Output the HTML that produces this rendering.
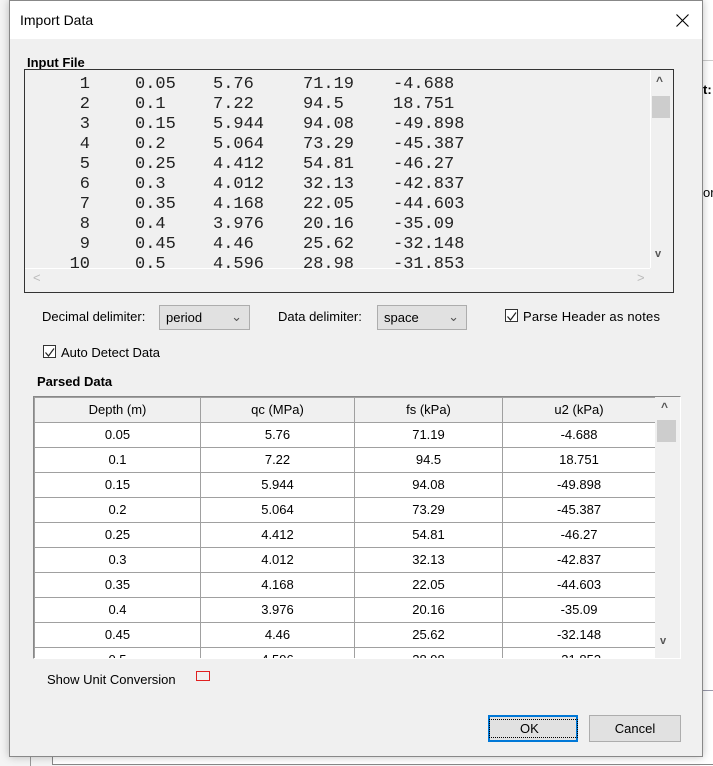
<!DOCTYPE html>
<html><head><style>
body{margin:0;width:713px;height:766px;background:#f4f4f4;position:relative;overflow:hidden;font-family:"Liberation Sans",sans-serif;font-size:13px;color:#000}
.a{position:absolute}
#dlg{left:9px;top:0;width:694px;height:757px;background:#f0f0f0;border:1px solid #888;box-sizing:border-box;box-shadow:0 0 8px rgba(0,0,0,.25)}
#title{left:0;top:0;width:692px;height:38px;background:#fff}
.mono{font-family:"Liberation Mono",monospace;font-size:17px;color:#222;line-height:20px}
table{border-collapse:collapse;font-size:13px;table-layout:fixed}
td,th{border:1px solid #a0a0a0;height:24px;line-height:22px;padding:0;text-align:center}
td{background:#fff}
th{font-weight:normal;background:#f0f0f0}
.cb{width:13px;height:13px;border:1px solid #333;background:#fff;box-sizing:border-box}
.sel{background:#e1e1e1;border:1px solid #adadad;box-sizing:border-box;height:25px;font-size:13px;padding:4px 6px}
</style></head><body>
<div class="a" style="left:700px;top:0;width:13px;height:766px;background:#fff"></div>
<div class="a" style="left:703px;top:60px;width:10px;height:1px;background:#ccc"></div>
<div class="a" style="left:703px;top:82px;font-size:13px;font-weight:bold">t:</div>
<div class="a" style="left:703px;top:185px;font-size:13px">or</div>
<div class="a" style="left:703px;top:690px;width:10px;height:1px;background:#99a"></div>
<div class="a" style="left:30px;top:757px;width:1px;height:9px;background:#999"></div>
<div class="a" style="left:52px;top:757px;width:661px;height:7px;border:1px solid #888;border-top:none;background:#fff"></div>
<div id="dlg" class="a">
<div id="title" class="a"><div class="a" style="left:10px;top:11px;font-size:14px">Import Data</div>
<svg class="a" style="left:666px;top:13px" width="13" height="13"><path d="M0.5 0.5L12.5 12.5M12.5 0.5L0.5 12.5" stroke="#000" stroke-width="1.1"/></svg></div>
<div class="a" style="left:17px;top:54px;font-weight:bold;font-size:13px">Input File</div>
<div class="a" style="left:14px;top:68px;width:650px;height:224px;border:1px solid #333;background:#f0f0f0;box-sizing:border-box;overflow:hidden">
<div class="a mono" style="left:40px;top:5px;width:25px;text-align:right">1<br>2<br>3<br>4<br>5<br>6<br>7<br>8<br>9<br>10</div>
<div class="a mono" style="left:110px;top:5px">0.05<br>0.1<br>0.15<br>0.2<br>0.25<br>0.3<br>0.35<br>0.4<br>0.45<br>0.5</div>
<div class="a mono" style="left:188px;top:5px">5.76<br>7.22<br>5.944<br>5.064<br>4.412<br>4.012<br>4.168<br>3.976<br>4.46<br>4.596</div>
<div class="a mono" style="left:278px;top:5px">71.19<br>94.5<br>94.08<br>73.29<br>54.81<br>32.13<br>22.05<br>20.16<br>25.62<br>28.98</div>
<div class="a mono" style="left:368px;top:5px">-4.688<br>18.751<br>-49.898<br>-45.387<br>-46.27<br>-42.837<br>-44.603<br>-35.09<br>-32.148<br>-31.853</div>
<div class="a" style="left:0;top:198px;width:625px;height:24px;background:#f0f0f0;border-top:1px solid #fff"></div>
<div class="a" style="left:625px;top:0;width:22px;height:198px;background:#f0f0f0;border-left:1px solid #fff"></div>
<div class="a" style="left:627px;top:26px;width:18px;height:22px;background:#cdcdcd"></div>
<div class="a" style="left:631px;top:4px;color:#555;font-size:12px;font-weight:bold">^</div>
<div class="a" style="left:630px;top:178px;color:#555;font-size:11px;font-weight:bold">v</div>
<div class="a" style="left:8px;top:200px;color:#bbb">&lt;</div>
<div class="a" style="left:612px;top:200px;color:#bbb">&gt;</div>
</div>
<div class="a" style="left:32px;top:308px">Decimal delimiter:</div>
<div class="a sel" style="left:149px;top:304px;width:91px">period<span style="position:absolute;right:7px;top:3px;color:#555">&#8964;</span></div>
<div class="a" style="left:268px;top:308px">Data delimiter:</div>
<div class="a sel" style="left:367px;top:304px;width:90px">space<span style="position:absolute;right:7px;top:3px;color:#555">&#8964;</span></div>
<div class="a cb" style="left:495px;top:308px"><svg width="11" height="11"><path d="M1.5 5.5L4.5 9L10 1.5" stroke="#222" fill="none" stroke-width="1.2"/></svg></div>
<div class="a" style="left:513px;top:308px;letter-spacing:0.2px">Parse Header as notes</div>
<div class="a cb" style="left:33px;top:344px"><svg width="11" height="11"><path d="M1.5 5.5L4.5 9L10 1.5" stroke="#222" fill="none" stroke-width="1.2"/></svg></div>
<div class="a" style="left:51px;top:344px">Auto Detect Data</div>
<div class="a" style="left:27px;top:373px;font-weight:bold">Parsed Data</div>
<div class="a" style="left:23px;top:395px;width:648px;height:263px;border:1px solid #888;border-right-color:#fff;border-bottom-color:#fff;background:#fff;box-sizing:border-box;overflow:hidden">
<table class="a" style="left:0;top:0;width:621px">
<colgroup><col style="width:166px"><col style="width:154px"><col style="width:148px"><col style="width:153px"></colgroup>
<tr><th>Depth (m)</th><th>qc (MPa)</th><th>fs (kPa)</th><th>u2 (kPa)</th></tr>
<tr><td>0.05</td><td>5.76</td><td>71.19</td><td>-4.688</td></tr>
<tr><td>0.1</td><td>7.22</td><td>94.5</td><td>18.751</td></tr>
<tr><td>0.15</td><td>5.944</td><td>94.08</td><td>-49.898</td></tr>
<tr><td>0.2</td><td>5.064</td><td>73.29</td><td>-45.387</td></tr>
<tr><td>0.25</td><td>4.412</td><td>54.81</td><td>-46.27</td></tr>
<tr><td>0.3</td><td>4.012</td><td>32.13</td><td>-42.837</td></tr>
<tr><td>0.35</td><td>4.168</td><td>22.05</td><td>-44.603</td></tr>
<tr><td>0.4</td><td>3.976</td><td>20.16</td><td>-35.09</td></tr>
<tr><td>0.45</td><td>4.46</td><td>25.62</td><td>-32.148</td></tr>
<tr><td>0.5</td><td>4.596</td><td>28.98</td><td>-31.853</td></tr>
</table>
<div class="a" style="left:621px;top:0;width:26px;height:263px;background:#f0f0f0"></div>
<div class="a" style="left:623px;top:23px;width:19px;height:22px;background:#cdcdcd"></div>
<div class="a" style="left:627px;top:3px;color:#555;font-size:12px;font-weight:bold">^</div>
<div class="a" style="left:626px;top:238px;color:#555;font-size:11px;font-weight:bold">v</div>
</div>
<div class="a" style="left:37px;top:671px">Show Unit Conversion</div>
<div class="a" style="left:186px;top:670px;width:14px;height:10px;border:1px solid #e02020;box-sizing:border-box"></div>
<div class="a" style="left:478px;top:714px;width:90px;height:27px;background:#e1e1e1;border:2px solid #0078d7;box-sizing:border-box;text-align:center;line-height:23px"><span style="outline:1px dotted #000;padding:1px 38px 1px 30px">OK</span></div>
<div class="a" style="left:579px;top:714px;width:92px;height:27px;background:#e1e1e1;border:1px solid #adadad;box-sizing:border-box;text-align:center;line-height:25px">Cancel</div>
</div>
</body></html>
